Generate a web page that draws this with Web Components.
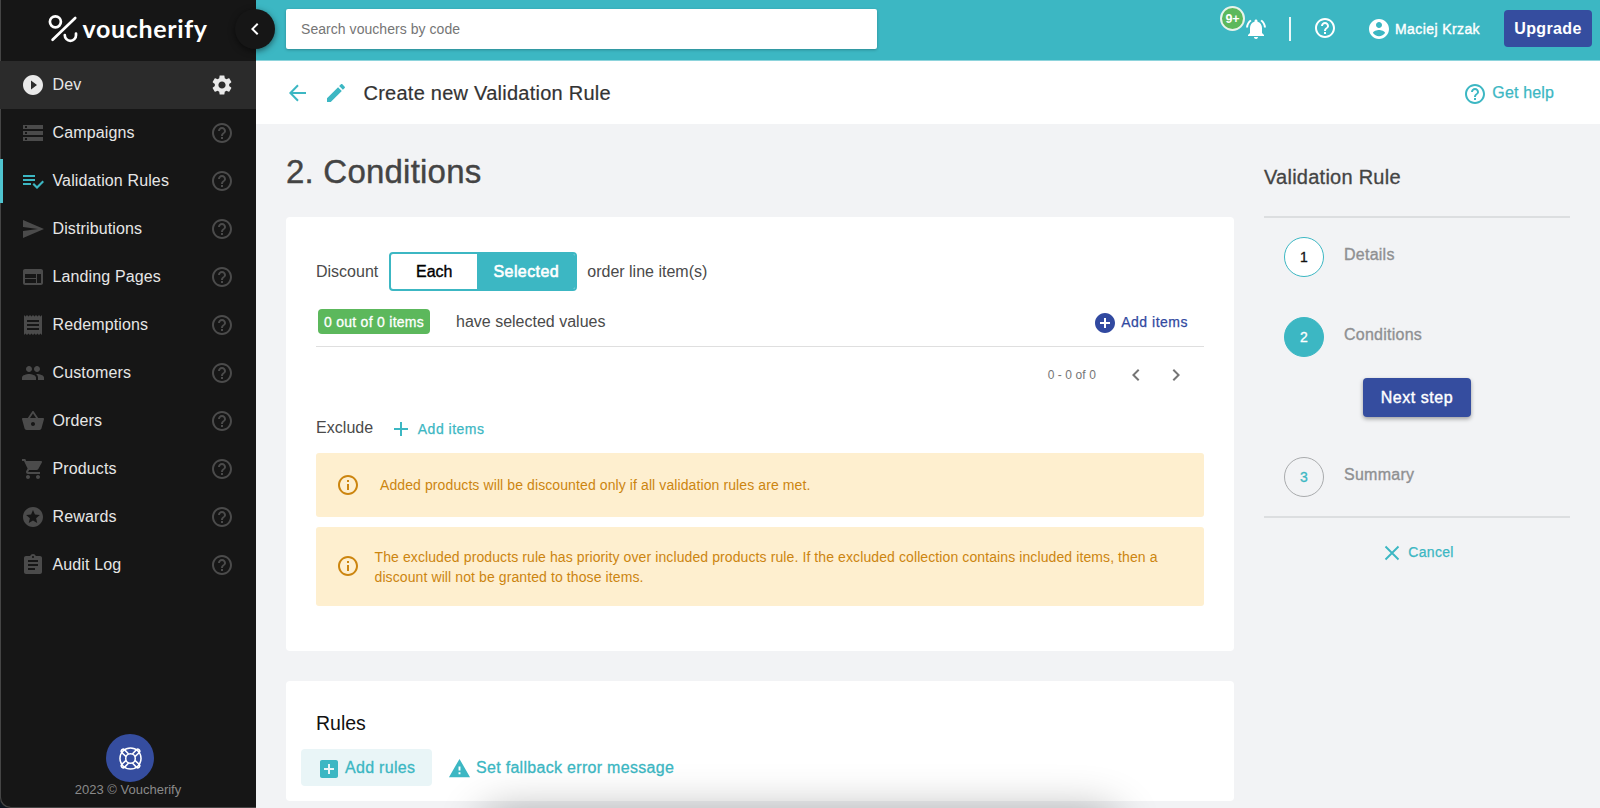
<!DOCTYPE html>
<html lang="en">
<head>
<meta charset="utf-8">
<title>Create new Validation Rule</title>
<style>
  body {
    margin: 0;
    background: #f2f3f5;
    font-family: "Liberation Sans", Arial, sans-serif;
    font-size: 16px;
    color: #4a4a4a;
    --teal: #3cb7c3;
    --blue: #354d9f;
  }
</style>
</head>
<body>
<voucherify-app></voucherify-app>

<script>
const HELP = 'M11 18h2v-2h-2v2zm1-16C6.48 2 2 6.48 2 12s4.48 10 10 10 10-4.48 10-10S17.52 2 12 2zm0 18c-4.41 0-8-3.59-8-8s3.59-8 8-8 8 3.59 8 8-3.59 8-8 8zm0-14c-2.21 0-4 1.79-4 4h2c0-1.1.9-2 2-2s2 .9 2 2c0 2-3 1.75-3 5h2c0-2.25 3-2.5 3-5 0-2.21-1.79-4-4-4z';

// Filled icons, all on a 24x24 grid
const ICONS = {
  help: HELP,
  play: 'M12 2C6.48 2 2 6.48 2 12s4.48 10 10 10 10-4.48 10-10S17.52 2 12 2zm-2 14.5v-9l6 4.5-6 4.5z',
  settings: 'M19.14 12.94c.04-.3.06-.61.06-.94 0-.32-.02-.64-.07-.94l2.03-1.58c.18-.14.23-.41.12-.61l-1.92-3.32c-.12-.22-.37-.29-.59-.22l-2.39.96c-.5-.38-1.03-.7-1.62-.94l-.36-2.54c-.04-.24-.24-.41-.48-.41h-3.84c-.24 0-.43.17-.47.41l-.36 2.54c-.59.24-1.13.57-1.62.94l-2.39-.96c-.22-.08-.47 0-.59.22L2.74 8.87c-.12.21-.08.47.12.61l2.03 1.58c-.05.3-.09.63-.09.94s.02.64.07.94l-2.03 1.58c-.18.14-.23.41-.12.61l1.92 3.32c.12.22.37.29.59.22l2.39-.96c.5.38 1.03.7 1.62.94l.36 2.54c.05.24.24.41.48.41h3.84c.24 0 .44-.17.47-.41l.36-2.54c.59-.24 1.13-.56 1.62-.94l2.39.96c.22.08.47 0 .59-.22l1.92-3.32c.12-.22.07-.47-.12-.61l-2.01-1.58zM12 15.6c-1.98 0-3.6-1.62-3.6-3.6s1.62-3.6 3.6-3.6 3.6 1.62 3.6 3.6-1.62 3.6-3.6 3.6z',
  storage: 'M2 20h20v-4H2v4zm2-3h2v2H4v-2zM2 4v4h20V4H2zm4 3H4V5h2v2zm-4 7h20v-4H2v4zm2-3h2v2H4v-2z',
  checklist: 'M14 10H2v2h12v-2zm0-4H2v2h12V6zM2 16h8v-2H2v2zm19.5-4.5L23 13l-6.99 7-4.51-4.5L13 14l3.01 3 5.49-5.5z',
  send: 'M2.01 21L23 12 2.01 3 2 10l15 2-15 2z',
  web: 'M20 4H4c-1.1 0-1.99.9-1.99 2L2 18c0 1.1.9 2 2 2h16c1.1 0 2-.9 2-2V6c0-1.1-.9-2-2-2zm-5 14H4v-4h11v4zm0-5H4V9h11v4zm5 5h-4V9h4v9z',
  receipt: 'M18 17H6v-2h12v2zm0-4H6v-2h12v2zm0-4H6V7h12v2zM3 22l1.5-1.5L6 22l1.5-1.5L9 22l1.5-1.5L12 22l1.5-1.5L15 22l1.5-1.5L18 22l1.5-1.5L21 22V2l-1.5 1.5L18 2l-1.5 1.5L15 2l-1.5 1.5L12 2l-1.5 1.5L9 2 7.5 3.5 6 2 4.5 3.5 3 2v20z',
  people: 'M16 11c1.66 0 2.99-1.34 2.99-3S17.66 5 16 5c-1.66 0-3 1.34-3 3s1.34 3 3 3zm-8 0c1.66 0 2.99-1.34 2.99-3S9.66 5 8 5C6.34 5 5 6.34 5 8s1.34 3 3 3zm0 2c-2.33 0-7 1.17-7 3.5V19h14v-2.5c0-2.33-4.67-3.5-7-3.5zm8 0c-.29 0-.62.02-.97.05 1.16.84 1.97 1.97 1.97 3.45V19h6v-2.5c0-2.33-4.67-3.5-7-3.5z',
  basket: 'M17.21 9l-4.38-6.56c-.19-.28-.51-.42-.83-.42-.32 0-.64.14-.83.43L6.79 9H2c-.55 0-1 .45-1 1 0 .09.01.18.04.27l2.54 9.27c.23.84 1 1.46 1.92 1.46h13c.92 0 1.69-.62 1.93-1.46l2.54-9.27L23 10c0-.55-.45-1-1-1h-4.79zM9 9l3-4.4L15 9H9zm3 8c-1.1 0-2-.9-2-2s.9-2 2-2 2 .9 2 2-.9 2-2 2z',
  cart: 'M7 18c-1.1 0-1.99.9-1.99 2S5.9 22 7 22s2-.9 2-2-.9-2-2-2zM1 2v2h2l3.6 7.59-1.35 2.45c-.16.28-.25.61-.25.96 0 1.1.9 2 2 2h12v-2H7.42c-.14 0-.25-.11-.25-.25l.03-.12.9-1.63h7.45c.75 0 1.41-.41 1.75-1.03l3.58-6.49c.08-.14.12-.31.12-.48 0-.55-.45-1-1-1H5.21l-.94-2H1zm16 16c-1.1 0-1.99.9-1.99 2s.89 2 1.99 2 2-.9 2-2-.9-2-2-2z',
  stars: 'M11.99 2C6.47 2 2 6.48 2 12s4.47 10 9.99 10C17.52 22 22 17.52 22 12S17.52 2 11.99 2zm4.24 16L12 15.45 7.77 18l1.12-4.81-3.73-3.23 4.92-.42L12 5l1.92 4.53 4.92.42-3.73 3.23L16.23 18z',
  assignment: 'M19 3h-4.18C14.4 1.84 13.3 1 12 1c-1.3 0-2.4.84-2.82 2H5c-1.1 0-2 .9-2 2v14c0 1.1.9 2 2 2h14c1.1 0 2-.9 2-2V5c0-1.1-.9-2-2-2zm-7 0c.55 0 1 .45 1 1s-.45 1-1 1-1-.45-1-1 .45-1 1-1zm2 14H7v-2h7v2zm3-4H7v-2h10v2zm0-4H7V7h10v2z',
  bell: 'M7.58 4.08L6.15 2.65C3.75 4.48 2.17 7.3 2.03 10.5h2c.15-2.65 1.51-4.97 3.55-6.42zm12.39 6.42h2c-.15-3.2-1.73-6.02-4.12-7.85l-1.42 1.43c2.02 1.45 3.39 3.77 3.54 6.42zM18 11c0-3.07-1.64-5.64-4.5-6.32V4c0-.83-.67-1.5-1.5-1.5s-1.5.67-1.5 1.5v.68C7.63 5.36 6 7.92 6 11v5l-2 2v1h16v-1l-2-2v-5zm-6 11c.14 0 .27-.01.4-.04.65-.14 1.18-.58 1.44-1.18.1-.24.15-.5.15-.78h-4c.01 1.1.9 2 2.01 2z',
  account: 'M12 2C6.48 2 2 6.48 2 12s4.48 10 10 10 10-4.48 10-10S17.52 2 12 2zm0 3c1.66 0 3 1.34 3 3s-1.34 3-3 3-3-1.34-3-3 1.34-3 3-3zm0 14.2c-2.5 0-4.71-1.28-6-3.22.03-1.99 4-3.08 6-3.08 1.99 0 5.97 1.09 6 3.08-1.29 1.94-3.5 3.22-6 3.22z',
  edit: 'M3 17.25V21h3.75L17.81 9.94l-3.75-3.75L3 17.25zM20.71 7.04c.39-.39.39-1.02 0-1.41l-2.34-2.34c-.39-.39-1.02-.39-1.41 0l-1.83 1.83 3.75 3.75 1.83-1.83z',
  info: 'M11 7h2v2h-2V7zm0 4h2v6h-2v-6zm1-9C6.48 2 2 6.48 2 12s4.48 10 10 10 10-4.48 10-10S17.52 2 12 2zm0 18c-4.41 0-8-3.59-8-8s3.59-8 8-8 8 3.59 8 8-3.59 8-8 8z',
  addCircle: 'M12 2C6.48 2 2 6.48 2 12s4.48 10 10 10 10-4.48 10-10S17.52 2 12 2zm5 11h-4v4h-2v-4H7v-2h4V7h2v4h4v2z',
  addBox: 'M19 3H5c-1.11 0-2 .9-2 2v14c0 1.1.89 2 2 2h14c1.1 0 2-.9 2-2V5c0-1.1-.9-2-2-2zm-2 10h-4v4h-2v-4H7v-2h4V7h2v4h4v2z',
  warning: 'M1 21h22L12 2 1 21zm12-3h-2v-2h2v2zm0-4h-2v-4h2v4z',
  left: 'M15.41 7.41L14 6l-6 6 6 6 1.41-1.41L10.83 12z',
  right: 'M10 6L8.59 7.41 13.17 12l-4.58 4.59L10 18l6-6z',
};

// Stroked icons, same grid
const LINES = {
  back: '<path d="M20 12H4.6M12 4.3L4.4 12l7.6 7.7"/>',
  plus: '<path d="M12 5v14M5 12h14"/>',
  close: '<path d="M5.5 5.5l13 13M18.5 5.5l-13 13"/>',
  buoy: '<circle cx="12" cy="12" r="11"/><circle cx="12" cy="12" r="5"/><path d="M2.2 5.2L7.4 10M5.2 2.2L10 7.4M21.8 5.2L16.6 10M18.8 2.2L14 7.4M2.2 18.8L7.4 14M5.2 21.8L10 16.6M21.8 18.8L16.6 14M18.8 21.8L14 16.6M2.2 5.2q0-3 3-3M21.8 5.2q0-3-3-3M2.2 18.8q0 3 3 3M21.8 18.8q0 3-3 3"/>',
};

function define(name, html, setup) {
  const template = document.createElement('template');
  template.innerHTML = html;

  customElements.define(name, class extends HTMLElement {
    constructor() {
      super();
      const shadow = this.attachShadow({mode: 'open'});
      shadow.appendChild(document.importNode(template.content, true));
    }

    connectedCallback() {
      if (setup) setup(this, this.shadowRoot);
    }
  });
}

/**
 * <v-icon name="help" size="24">
 */
define('v-icon', `
  <style>
    :host { display: block; flex: none; line-height: 0; }
    svg { display: block; overflow: visible; }
  </style>
  <svg viewBox="0 0 24 24" fill="currentColor"></svg>
`, (host, root) => {
  const svg = root.querySelector('svg');
  const name = host.getAttribute('name');
  const size = host.getAttribute('size') || 24;
  svg.setAttribute('width', size);
  svg.setAttribute('height', size);
  if (LINES[name]) {
    svg.setAttribute('fill', 'none');
    svg.setAttribute('stroke', 'currentColor');
    svg.setAttribute('stroke-width', host.getAttribute('stroke') || 2);
    svg.innerHTML = LINES[name];
  } else {
    svg.innerHTML = `<path d="${ICONS[name]}"/>`;
  }
});

define('v-logo', `
  <style>
    :host { display: flex; height: 61px; padding-left: 48px; color: #fff; }
    svg { flex: none; }
    span { font: 700 25px/56px Lato, sans-serif; letter-spacing: .65px; margin-left: 3.5px; }
  </style>
  <svg width="31" height="61" fill="none" stroke="currentColor" stroke-width="2.7" stroke-linecap="round">
    <circle cx="7.4" cy="21.8" r="5.5"/>
    <path d="M27.2 18L4.6 39.8"/>
    <path d="M16.8 35.2a5.6 5.6 0 0 0 11.2 0v-1.6"/>
  </svg>
  <span>voucherify</span>
`);

define('v-nav-item', `
  <style>
    :host {
      display: flex; align-items: center; box-sizing: border-box; height: 48px;
      padding: 0 22px 0 20.5px; color: #e6e6e6;
    }
    .icon, .help { color: #4b4b4b; }
    .label { flex: 1; margin-left: 8px; line-height: 20px; letter-spacing: .13px; }
    :host([active]) { position: relative; }
    :host([active])::before {
      content: ""; position: absolute; left: 0; top: 2px; width: 3px; height: 44px; background: #4fc4cf;
    }
    :host([active]) .icon { color: var(--teal); }
    :host([head]) { background: #2b2b2b; }
    :host([head]) .icon, :host([head]) .help { color: #e9e9e9; }
  </style>
  <v-icon class="icon"></v-icon>
  <span class="label"><slot></slot></span>
  <v-icon class="help" name="help"></v-icon>
`, (host, root) => {
  root.querySelector('.icon').setAttribute('name', host.getAttribute('icon'));
  if (host.hasAttribute('head')) root.querySelector('.help').setAttribute('name', 'settings');
  // children were upgraded before their names were known
  root.querySelectorAll('v-icon').forEach((icon) => icon.connectedCallback());
});

define('v-sidebar', `
  <style>
    :host {
      display: flex; flex-direction: column; position: relative; z-index: 2; box-sizing: border-box;
      width: 256px; height: 808px; background: #161616; box-shadow: inset 1px -1px 0 #454545;
      border-bottom-left-radius: 10px;
    }
    .toggle {
      position: absolute; left: 235px; top: 9px; width: 40px; height: 40px; border-radius: 50%;
      display: flex; align-items: center; justify-content: center;
      background: #161616; color: #fff; box-shadow: 0 2px 6px rgba(0, 0, 0, .5);
    }
    footer {
      margin-top: auto; padding: 0 0 9px 4px; display: flex; flex-direction: column; align-items: center;
      font-size: 13px; line-height: 18px; color: #8a8a8a;
    }
    .chat {
      display: flex; align-items: center; justify-content: center;
      width: 48px; height: 48px; border-radius: 50%; background: var(--blue); color: #fff;
    }
    .copy { margin-left: -4px; margin-top: -1px; }
  </style>
  <v-logo></v-logo>
  <v-nav-item head icon="play">Dev</v-nav-item>
  <v-nav-item icon="storage">Campaigns</v-nav-item>
  <v-nav-item active icon="checklist">Validation Rules</v-nav-item>
  <v-nav-item icon="send">Distributions</v-nav-item>
  <v-nav-item icon="web">Landing Pages</v-nav-item>
  <v-nav-item icon="receipt">Redemptions</v-nav-item>
  <v-nav-item icon="people">Customers</v-nav-item>
  <v-nav-item icon="basket">Orders</v-nav-item>
  <v-nav-item icon="cart">Products</v-nav-item>
  <v-nav-item icon="stars">Rewards</v-nav-item>
  <v-nav-item icon="assignment">Audit Log</v-nav-item>
  <footer>
    <div class="chat"><v-icon name="buoy" size="23" stroke="1.6"></v-icon></div>
    <div class="copy">2023 © Voucherify</div>
  </footer>
  <div class="toggle"><v-icon name="left" size="24"></v-icon></div>
`);

define('v-topbar', `
  <style>
    :host {
      display: flex; align-items: center; box-sizing: border-box; height: 61px;
      padding: 0 8px 4px 30px; background: var(--teal); border-bottom: 1px solid #8dd4dc; color: #fff;
    }
    .search {
      box-sizing: border-box; width: 591px; height: 40px; padding: 0 15px; border-radius: 2px;
      background: #fff; color: #757575; font-size: 14px; line-height: 40px; letter-spacing: .05px;
      box-shadow: 0 1px 3px rgba(0, 0, 0, .25); margin-top: 2px;
    }
    .bell { position: relative; margin: 1px 0 0 auto; }
    .count {
      position: absolute; left: -24px; top: -11px; box-sizing: border-box; width: 25px; height: 25px;
      border: 2px solid #e8f3ea; border-radius: 50%; background: #5cb85c;
      font-size: 12.5px; font-weight: bold; line-height: 22px; text-align: center;
    }
    .divider { width: 2px; height: 24px; margin: 1px 22px 0 21px; background: #fff; opacity: .9; }
    .user { display: flex; align-items: center; margin-left: 30px; }
    .user v-icon { margin-top: 2px; }
    .name { margin: 2px 0 0 4px; font-size: 14px; letter-spacing: .4px; -webkit-text-stroke: .4px; }
    .upgrade {
      width: 88px; height: 37px; margin-left: 24px; border-radius: 4px; background: var(--blue);
      font-weight: bold; line-height: 38px; text-align: center; letter-spacing: .35px;
    }
  </style>
  <div class="search">Search vouchers by code</div>
  <div class="bell"><v-icon name="bell"></v-icon><span class="count">9+</span></div>
  <div class="divider"></div>
  <v-icon name="help"></v-icon>
  <div class="user"><v-icon name="account"></v-icon><span class="name">Maciej Krzak</span></div>
  <div class="upgrade">Upgrade</div>
`);

define('v-titlebar', `
  <style>
    :host {
      display: flex; align-items: center; box-sizing: border-box; height: 63px;
      padding: 0 46px 0 30px; background: #fff; color: var(--teal);
    }
    .title { margin: 2px 0 0 15.5px; font-size: 20px; letter-spacing: .25px; color: #333; -webkit-text-stroke: .2px; }
    .edit { margin-left: 14px; }
    .help { display: flex; align-items: center; margin-left: auto; letter-spacing: .15px; -webkit-text-stroke: .25px; }
    .help v-icon { margin: 2px 5px 0 0; }
  </style>
  <v-icon name="back" stroke="2"></v-icon>
  <v-icon class="edit" name="edit"></v-icon>
  <span class="title"><slot></slot></span>
  <span class="help"><v-icon name="help"></v-icon>Get help</span>
`);

define('v-card', `
  <style>
    :host { display: block; box-sizing: border-box; padding: 0 30px; border-radius: 4px; background: #fff; }
  </style>
  <slot></slot>
`);

define('v-toggle', `
  <style>
    :host {
      display: flex; box-sizing: border-box; width: 188px; height: 39px; margin: 0 10px 1px 11px; overflow: hidden;
      border: 2px solid var(--teal); border-radius: 4px; line-height: 36px; text-align: center;
    }
    .off { width: 86px; color: #000; -webkit-text-stroke: .35px; }
    .on { flex: 1; background: var(--teal); color: #fff; letter-spacing: .4px; -webkit-text-stroke: .6px; }
  </style>
  <span class="off"><slot name="off"></slot></span>
  <span class="on"><slot name="on"></slot></span>
`);

define('v-alert', `
  <style>
    :host {
      display: flex; align-items: center; box-sizing: border-box; height: 64px; margin-bottom: 10px;
      padding: 0 40px 0 20px; border-radius: 3px; background: #feefcf; color: #cc850f;
      font-size: 14px; line-height: 19.5px; letter-spacing: .1px;
    }
    span { margin-top: 1px; }
    v-icon { margin-right: 20px; }
    :host([tall]) { height: 79px; }
    :host([tall]) span { margin-top: 2px; }
    :host([tall]) v-icon { margin: -1px 14.5px 0 0; }
  </style>
  <v-icon name="info"></v-icon>
  <span><slot></slot></span>
`);

define('v-conditions', `
  <style>
    :host { display: block; width: 948px; }
    h1 {
      margin: 0; height: 93px; box-sizing: border-box; padding-top: 28px; color: #444;
      font-size: 33px; font-weight: normal; line-height: 40px; letter-spacing: .22px; -webkit-text-stroke: .4px;
    }
    .row { display: flex; align-items: center; }
    .items { height: 434px; padding-top: 35px; }
    .summary { height: 55px; box-sizing: border-box; padding: 4px 16px 0 2px; border-bottom: 1px solid #dfdfdf; }
    .badge {
      box-sizing: border-box; width: 112px; height: 25px; margin-right: 26px; border-radius: 4px;
      background: #5cb85c; color: #fff; font-size: 14px; line-height: 26px; text-align: center;
      letter-spacing: .28px; -webkit-text-stroke: .3px;
    }
    .add { display: flex; align-items: center; font-size: 14px; letter-spacing: .5px; -webkit-text-stroke: .25px; }
    .blue { margin: 2px 0 0 auto; color: #3149a0; }
    .blue v-icon { margin: 1px 4px 0 0; }
    .pager { justify-content: flex-end; height: 56px; padding-right: 16px; font-size: 12px; letter-spacing: .1px; color: #757575; }
    .pager v-icon { margin-left: 16px; }
    .pager v-icon:first-of-type { margin-left: 28px; }
    .exclude { height: 50px; letter-spacing: .05px; }
    .exclude .add { margin: 1px 0 0 16px; color: var(--teal); }
    .exclude v-icon { margin-right: 4.5px; }
    .rules { height: 120px; margin-top: 30px; padding-top: 30px; }
    .rules h2 { margin: 0; color: #111; font-size: 19.5px; font-weight: normal; line-height: 24px; }
    .actions { margin: 14px 0 0 -15px; color: var(--teal); letter-spacing: .3px; -webkit-text-stroke: .3px; }
    .button {
      display: flex; align-items: center; box-sizing: border-box; width: 131px; height: 37px;
      margin-right: 16px; padding-left: 16px; border-radius: 4px; background: #e9f5f7;
    }
    .button v-icon { margin: 3px 4px 0 0; }
    .actions > v-icon { margin: 2px 5px 0 0; }
    .label { margin-top: 1px; }
  </style>
  <h1>2. Conditions</h1>
  <v-card class="items">
    <div class="row">
      Discount
      <v-toggle><span slot="off">Each</span><span slot="on">Selected</span></v-toggle>
      order line item(s)
    </div>
    <div class="row summary">
      <span class="badge">0 out of 0 items</span>
      <span class="label">have selected values</span>
      <span class="add blue"><v-icon name="addCircle"></v-icon>Add items</span>
    </div>
    <div class="row pager">0 - 0 of 0<v-icon name="left"></v-icon><v-icon name="right"></v-icon></div>
    <div class="row exclude">
      Exclude
      <span class="add"><v-icon name="plus"></v-icon>Add items</span>
    </div>
    <v-alert>Added products will be discounted only if all validation rules are met.</v-alert>
    <v-alert tall>The excluded products rule has priority over included products rule. If the excluded collection contains included items, then a discount will not be granted to those items.</v-alert>
  </v-card>
  <v-card class="rules">
    <h2>Rules</h2>
    <div class="row actions">
      <span class="button"><v-icon name="addBox"></v-icon><span class="label">Add rules</span></span>
      <v-icon name="warning" size="23"></v-icon><span class="label">Set fallback error message</span>
    </div>
  </v-card>
`);

define('v-step', `
  <style>
    :host { display: flex; height: 40px; padding-left: 20px; }
    .number {
      box-sizing: border-box; width: 40px; height: 40px; margin-right: 20px; border: 1px solid #a9abad;
      border-radius: 50%; font-size: 14px; line-height: 39px; text-align: center; color: var(--teal);
      -webkit-text-stroke: .3px;
    }
    .label { height: 36px; line-height: 35px; letter-spacing: .25px; color: #8f9092; -webkit-text-stroke: .35px; }
    :host([done]) .number { border: 1.5px solid var(--teal); background: #fff; color: #111; line-height: 39px; }
    :host([current]) .number { border-color: var(--teal); background: var(--teal); color: #fff; }
  </style>
  <span class="number"><slot name="number"></slot></span>
  <span class="label"><slot></slot></span>
`);

define('v-stepper', `
  <style>
    :host { display: block; width: 306px; padding-top: 41px; }
    h3 {
      margin: 0; height: 51px; color: #444; font-size: 20px; font-weight: normal; line-height: 25px;
      letter-spacing: .25px; -webkit-text-stroke: .3px;
    }
    .steps { box-sizing: border-box; height: 302px; padding-top: 19px; border: solid #dcdee0; border-width: 2px 0; }
    v-step { margin-bottom: 40px; }
    v-step[current] { margin-bottom: 21px; }
    .next {
      width: 108px; height: 39px; margin: 0 auto 40px; border-radius: 4px; background: var(--blue); color: #fff;
      line-height: 40px; text-align: center; letter-spacing: .55px; -webkit-text-stroke: .4px;
      box-shadow: 0 2px 4px rgba(0, 0, 0, .35);
    }
    .cancel {
      display: flex; align-items: center; justify-content: center; height: 68px;
      color: var(--teal); font-size: 14px; letter-spacing: .3px; -webkit-text-stroke: .25px;
    }
    .cancel v-icon { margin: 2px 4px 0 0; }
  </style>
  <h3>Validation Rule</h3>
  <div class="steps">
    <v-step done><span slot="number">1</span>Details</v-step>
    <v-step current><span slot="number">2</span>Conditions</v-step>
    <div class="next">Next step</div>
    <v-step><span slot="number">3</span>Summary</v-step>
  </div>
  <div class="cancel"><v-icon name="close" size="24" stroke="1.9"></v-icon>Cancel</div>
`);

define('voucherify-app', `
  <style>
    :host { display: grid; grid-template-columns: 256px 1fr; position: relative; height: 808px; overflow: hidden; background: #0d1620; }
    .main { background: #f2f3f5; }
    .page { display: flex; gap: 30px; padding: 0 30px; }
    /* shade rising from under the bottom edge */
    .shade {
      position: absolute; left: 490px; top: 820px; width: 620px; height: 30px; border-radius: 15px;
      box-shadow: 0 0 44px 10px rgba(0, 0, 0, .3);
    }
  </style>
  <v-sidebar></v-sidebar>
  <div class="main">
    <v-topbar></v-topbar>
    <v-titlebar>Create new Validation Rule</v-titlebar>
    <div class="page">
      <v-conditions></v-conditions>
      <v-stepper></v-stepper>
    </div>
  </div>
  <div class="shade"></div>
`);
</script>
</body>
</html>
